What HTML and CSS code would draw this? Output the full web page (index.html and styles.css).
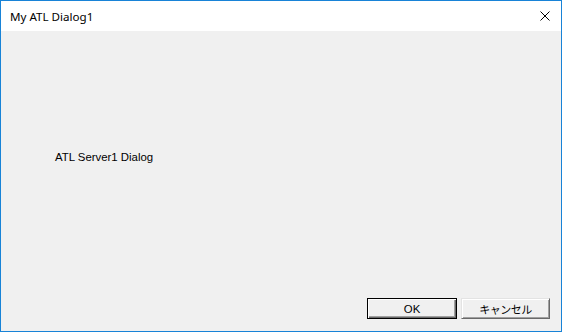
FILE: index.html
```html
<!DOCTYPE html>
<html>
<head>
<meta charset="utf-8">
<link rel="stylesheet" href="styles.css">
</head>
<body>
<div class="window">
  <div class="titlebar">
    <span class="title">My ATL Dialog1</span>
    <span class="close">
      <svg width="10" height="10" viewBox="0 0 10 10"><path d="M0.5 0.5 L9.5 9.5 M9.5 0.5 L0.5 9.5" stroke="#000" stroke-width="1" fill="none"/></svg>
    </span>
  </div>
  <div class="client">
    <div class="label">ATL Server1 Dialog</div>
    <div class="buttons">
      <button class="btn default">OK</button>
      <button class="btn jp">キャンセル</button>
    </div>
  </div>
</div>
</body>
</html>
```
FILE: styles.css
```css
html, body { margin: 0; padding: 0; }
body { width: 562px; height: 332px; overflow: hidden; }
.window {
  box-sizing: border-box;
  width: 562px; height: 332px;
  border: 1px solid #1883d7;
  display: flex; flex-direction: column;
  background: #f0f0f0;
}
.titlebar {
  height: 30px; background: #fff;
  display: flex; align-items: center; justify-content: space-between;
  padding: 0 11px 0 9px;
}
.title {
  font-family: "Noto Sans", "Open Sans", sans-serif;
  font-size: 11.6px; color: #000;
}
.close { display: flex; width: 10px; height: 10px; }
.client {
  flex: 1; display: flex; flex-direction: column;
  padding: 119px 11px 12px 54px;
  font-family: "Liberation Sans", "Noto Sans CJK JP", sans-serif;
  font-size: 11.4px; color: #000;
}
.label { line-height: 14px; }
.buttons {
  margin-top: auto; display: flex; justify-content: flex-end; gap: 4px;
}
.btn {
  box-sizing: border-box; width: 89px; height: 21px; margin: 0; padding: 0;
  background: #f0f0f0;
  border: 1px solid;
  border-color: #e3e3e3 #696969 #696969 #e3e3e3;
  box-shadow: inset 1px 1px 0 #fff, inset -1px -1px 0 #a0a0a0;
  font-family: "Liberation Sans", "Noto Sans CJK JP", sans-serif;
  font-size: 11.4px; color: #000;
}
.btn.jp { font-size: 11px; letter-spacing: -0.5px; }
.btn.default {
  border: 1px solid #000;
  box-shadow: inset 1px 1px 0 #fff, inset -1px -1px 0 #696969, inset -2px -2px 0 #a0a0a0;
  width: 90px;
}
```
